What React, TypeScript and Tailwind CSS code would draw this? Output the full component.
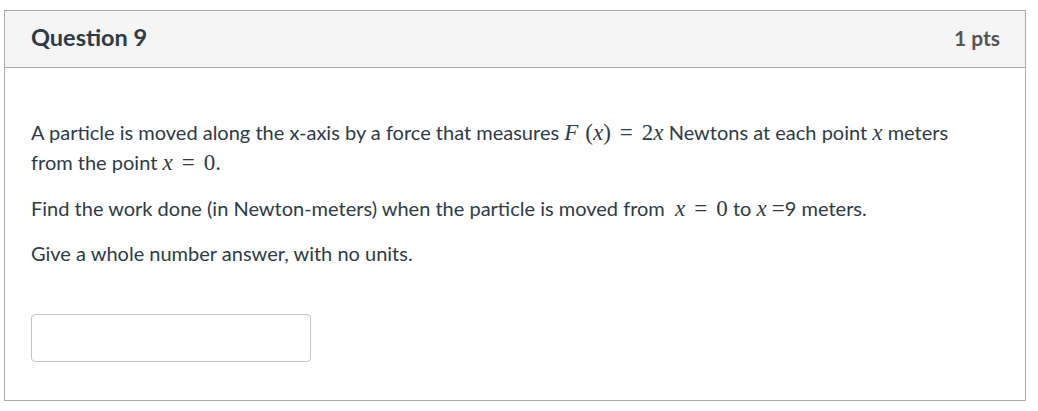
import React from 'react';

function M({ children }: { children: React.ReactNode }) {
  return <span className="font-['Liberation_Serif',serif] text-[23px] leading-none">{children}</span>;
}

function V({ children }: { children: React.ReactNode }) {
  return <span className="font-['Liberation_Serif',serif] italic text-[23px] leading-none">{children}</span>;
}

function Eq() {
  return <span className="font-['Liberation_Serif',serif] text-[23px] leading-none mx-[9px]">=</span>;
}

export default function App() {
  return (
    <div className="w-[1038px] h-[411px] bg-white pt-[10px] pl-[4px] font-['Lato',sans-serif] text-[#2d3b45]">
      <div className="w-[1022px] h-[391px] border border-[#ababab] flex flex-col">
        <div className="h-[57px] shrink-0 bg-[#f5f5f5] border-b border-[#ababab] flex items-center justify-between pl-[26px] pr-[25px] pb-[2px]">
          <h2 className="text-[23.5px] font-bold">Question 9</h2>
          <div className="text-[21px] font-bold text-[#555]">1 pts</div>
        </div>
        <div className="pl-[26px] pr-[40px] pt-[49px] text-[20px] leading-[30px]">
          <p>
            A particle is moved along the x-axis by a force that measures <V>F</V><span className="inline-block w-[7px]" /><M>(</M><V>x</V><M>)</M><Eq /><M>2</M><V>x</V> Newtons at each point <V>x</V> meters from the point <V>x</V><Eq /><M>0.</M>
          </p>
          <p className="mt-[16px]">
            Find the work done (in Newton-meters) when the particle is moved from &nbsp;<V>x</V><Eq /><M>0</M> to <V>x</V> <M>=</M>9 meters.
          </p>
          <p className="mt-[15px]">Give a whole number answer, with no units.</p>
          <input
            type="text"
            className="mt-[46px] w-[280px] h-[48px] border border-[#c4c4c4] rounded-[4px] bg-white outline-none"
          />
        </div>
      </div>
    </div>
  );
}
